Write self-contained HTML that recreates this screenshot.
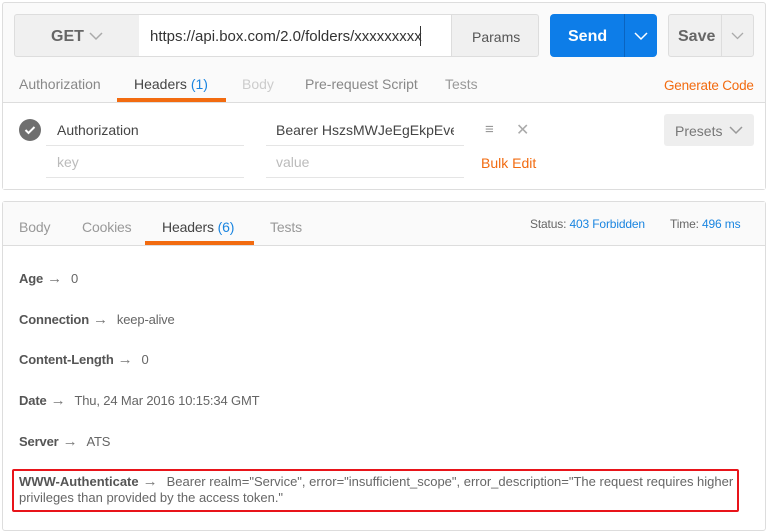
<!DOCTYPE html>
<html><head><meta charset="utf-8"><style>
*{box-sizing:border-box;margin:0;padding:0}
body{width:768px;height:517px;background:#fff;font-family:"Liberation Sans",sans-serif;position:relative;overflow:hidden;color:#555}
.a{position:absolute}
.p1{left:2px;top:2px;width:764px;height:188px;border:1px solid #ddd;border-radius:3px;background:#fafafa}
.p1w{left:3px;top:102px;width:762px;height:87px;background:#fff;border-top:1px solid #ddd}
.box{border:1px solid #ddd;border-radius:3px;background:#f0f0f0}
.t{font-size:14px;white-space:nowrap}
.p2{left:2px;top:201px;width:764px;height:330px;border:1px solid #ddd;border-radius:3px;background:#fff}
.p2h{left:3px;top:202px;width:762px;height:44px;background:#fafafa;border-bottom:1px solid #ddd}
.h{font-size:13px;color:#666;white-space:nowrap;letter-spacing:-0.15px}
.h b{color:#555}
.ar{font-size:15px;margin:0 9px 0 4px;color:#777}
</style></head><body>
<div class="a p1"></div>
<div class="a p1w"></div>
<div class="a box" style="left:14px;top:14px;width:126px;height:43px;border-radius:3px 0 0 3px"></div>
<div class="a t" style="left:51px;top:28px;font-weight:bold;font-size:16px;color:#666">GET</div>
<svg class="a" style="left:89px;top:32px" width="14" height="9"><path d="M1 1l6 6 6-6" stroke="#aaa" stroke-width="1.5" fill="none"/></svg>
<div class="a" style="left:139px;top:14px;width:313px;height:43px;border:1px solid #ddd;border-left:none;background:#fff"></div>
<div class="a t" style="left:150px;top:28px;color:#333;font-size:15px">https://api.box.com/2.0/folders/xxxxxxxxx</div>
<div class="a" style="left:420px;top:26px;width:1px;height:20px;background:#333"></div>
<div class="a box" style="left:451px;top:14px;width:88px;height:43px;border-radius:0 3px 3px 0"></div>
<div class="a t" style="left:472px;top:29px;color:#555">Params</div>
<div class="a" style="left:550px;top:14px;width:107px;height:43px;background:#0d7de8;border-radius:4px"></div>
<div class="a" style="left:624px;top:14px;width:1px;height:43px;background:#0a64c0"></div>
<div class="a t" style="left:568px;top:28px;color:#fff;font-weight:bold;font-size:16px">Send</div>
<svg class="a" style="left:634px;top:32px" width="14" height="9"><path d="M1 1l6 6 6-6" stroke="#fff" stroke-width="1.5" fill="none"/></svg>
<div class="a box" style="left:668px;top:14px;width:86px;height:43px"></div>
<div class="a" style="left:721px;top:14px;width:1px;height:43px;background:#ddd"></div>
<div class="a t" style="left:678px;top:28px;font-weight:bold;font-size:16px;color:#666">Save</div>
<svg class="a" style="left:731px;top:32px" width="13" height="8"><path d="M1 1l5.5 5.5 5.5-5.5" stroke="#aaa" stroke-width="1.3" fill="none"/></svg>
<div class="a t" style="left:19px;top:76px;color:#888">Authorization</div>
<div class="a t" style="left:134px;top:76px;color:#444">Headers <span style="color:#1a85e0">(1)</span></div>
<div class="a" style="left:117px;top:98px;width:109px;height:4px;background:#f26b10"></div>
<div class="a t" style="left:242px;top:76px;color:#ccc">Body</div>
<div class="a t" style="left:305px;top:76px;color:#888">Pre-request Script</div>
<div class="a t" style="left:445px;top:76px;color:#999">Tests</div>
<div class="a t" style="left:664px;top:78px;color:#f26b10;font-size:13.5px;letter-spacing:-0.2px">Generate Code</div>
<div class="a" style="left:19px;top:119px;width:22px;height:22px;border-radius:50%;background:#6f6f6f"></div>
<svg class="a" style="left:24px;top:125px" width="12" height="10"><path d="M1.5 5l3 3 6-6" stroke="#fff" stroke-width="2" fill="none"/></svg>
<div class="a t" style="left:57px;top:122px;color:#444">Authorization</div>
<div class="a" style="left:46px;top:145px;width:198px;height:1px;background:#e5e5e5"></div>
<div class="a" style="left:46px;top:177px;width:198px;height:1px;background:#e5e5e5"></div>
<div class="a t" style="left:57px;top:154px;color:#bbb">key</div>
<div class="a t" style="left:276px;top:122px;color:#444;width:178px;overflow:hidden">Bearer HszsMWJeEgEkpEve2c</div>
<div class="a" style="left:266px;top:145px;width:198px;height:1px;background:#e5e5e5"></div>
<div class="a" style="left:266px;top:177px;width:198px;height:1px;background:#e5e5e5"></div>
<div class="a t" style="left:276px;top:154px;color:#bbb">value</div>
<div class="a t" style="left:485px;top:121px;color:#999;font-size:15px">≡</div>
<div class="a t" style="left:516px;top:120px;color:#aaa;font-size:16px">✕</div>
<div class="a t" style="left:481px;top:155px;color:#f26b10">Bulk Edit</div>
<div class="a" style="left:664px;top:114px;width:90px;height:32px;background:#eee;border-radius:3px"></div>
<div class="a t" style="left:675px;top:123px;color:#777">Presets</div>
<svg class="a" style="left:729px;top:126px" width="14" height="9"><path d="M1 1l6 6 6-6" stroke="#999" stroke-width="1.5" fill="none"/></svg>
<div class="a p2"></div>
<div class="a p2h"></div>
<div class="a h" style="left:19px;top:219px;color:#999;font-size:14px">Body</div>
<div class="a h" style="left:82px;top:219px;color:#999;font-size:14px">Cookies</div>
<div class="a h" style="left:162px;top:219px;color:#444;font-size:14px">Headers <span style="color:#1a85e0">(6)</span></div>
<div class="a" style="left:145px;top:241px;width:109px;height:4px;background:#f26b10"></div>
<div class="a h" style="left:270px;top:219px;color:#999;font-size:14px">Tests</div>
<div class="a h" style="left:530px;top:217px;font-size:12px">Status: <span style="color:#1a85e0">403 Forbidden</span></div>
<div class="a h" style="left:670px;top:217px;font-size:12px">Time: <span style="color:#1a85e0">496 ms</span></div>
<div class="a h" style="left:19px;top:270px"><b>Age</b><span class="ar">→</span>0</div>
<div class="a h" style="left:19px;top:311px"><b>Connection</b><span class="ar">→</span>keep-alive</div>
<div class="a h" style="left:19px;top:351px"><b>Content-Length</b><span class="ar">→</span>0</div>
<div class="a h" style="left:19px;top:392px"><b>Date</b><span class="ar">→</span>Thu, 24 Mar 2016 10:15:34 GMT</div>
<div class="a h" style="left:19px;top:433px"><b>Server</b><span class="ar">→</span>ATS</div>
<div class="a" style="left:12px;top:469px;width:727px;height:43px;border:2px solid #e8141a;border-radius:2px"></div>
<div class="a h" style="left:19px;top:474px;width:716px;white-space:normal;line-height:16px;letter-spacing:0"><b>WWW-Authenticate</b><span class="ar">→</span>Bearer realm="Service", error="insufficient_scope", error_description="The request requires higher privileges than provided by the access token."</div>
</body></html>
